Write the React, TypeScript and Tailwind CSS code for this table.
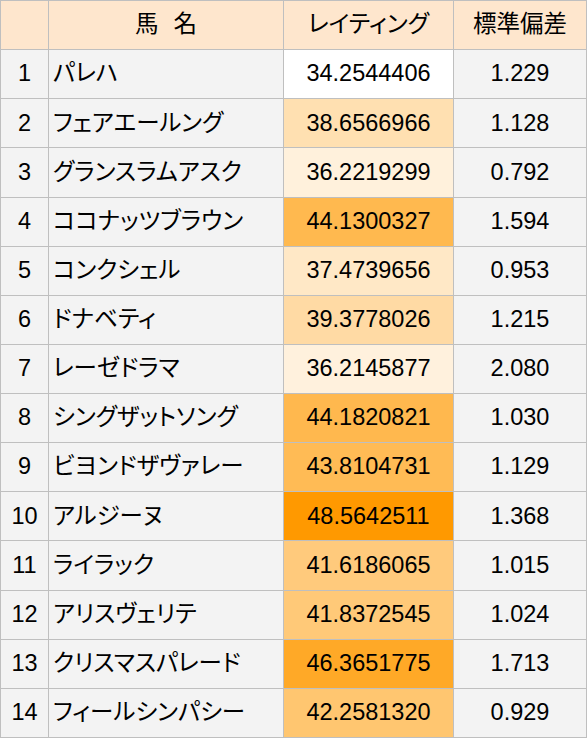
const ROWS = [
  { no: 1, name: "パレハ", rating: "34.2544406", bg: "bg-[#ffffff]", sd: "1.229" },
  { no: 2, name: "フェアエールング", rating: "38.6566966", bg: "bg-[#ffe0b1]", sd: "1.128" },
  { no: 3, name: "グランスラムアスク", rating: "36.2219299", bg: "bg-[#fff1dc]", sd: "0.792" },
  { no: 4, name: "ココナッツブラウン", rating: "44.1300327", bg: "bg-[#ffb94f]", sd: "1.594" },
  { no: 5, name: "コンクシェル", rating: "37.4739656", bg: "bg-[#ffe8c6]", sd: "0.953" },
  { no: 6, name: "ドナベティ", rating: "39.3778026", bg: "bg-[#ffdaa4]", sd: "1.215" },
  { no: 7, name: "レーゼドラマ", rating: "36.2145877", bg: "bg-[#fff1dd]", sd: "2.080" },
  { no: 8, name: "シングザットソング", rating: "44.1820821", bg: "bg-[#ffb84e]", sd: "1.030" },
  { no: 9, name: "ビヨンドザヴァレー", rating: "43.8104731", bg: "bg-[#ffbb55]", sd: "1.129" },
  { no: 10, name: "アルジーヌ", rating: "48.5642511", bg: "bg-[#ff9900]", sd: "1.368" },
  { no: 11, name: "ライラック", rating: "41.6186065", bg: "bg-[#ffca7c]", sd: "1.015" },
  { no: 12, name: "アリスヴェリテ", rating: "41.8372545", bg: "bg-[#ffc978]", sd: "1.024" },
  { no: 13, name: "クリスマスパレード", rating: "46.3651775", bg: "bg-[#ffa927]", sd: "1.713" },
  { no: 14, name: "フィールシンパシー", rating: "42.2581320", bg: "bg-[#ffc670]", sd: "0.929" },
];

const cell = "flex items-center text-[23.5px] leading-none text-black";

export default function App() {
  return (
    <div
      className="grid w-[587px] grid-cols-[47px_234px_169px_132px] auto-rows-[48.133px] gap-px bg-[#bfbfbf] p-px [font-family:'Liberation_Sans','Noto_Sans_CJK_JP',sans-serif] [font-feature-settings:'palt']"
    >
      {/* header */}
      <div className={`${cell} bg-[#fee6cd]`} />
      <div className={`${cell} justify-center gap-[15px] bg-[#fee6cd]`}>
        <span>馬</span>
        <span>名</span>
      </div>
      <div className={`${cell} justify-center bg-[#fee6cd]`}>レイティング</div>
      <div className={`${cell} justify-center bg-[#fee6cd]`}>標準偏差</div>

      {ROWS.map((r) => (
        <div key={r.no} className="contents">
          <div className={`${cell} justify-center bg-[#f3f3f3]`}>{r.no}</div>
          <div className={`${cell} bg-[#f3f3f3] pl-[4px]`}>{r.name}</div>
          <div className={`${cell} justify-center ${r.bg}`}>{r.rating}</div>
          <div className={`${cell} justify-center bg-[#f3f3f3]`}>{r.sd}</div>
        </div>
      ))}
    </div>
  );
}
